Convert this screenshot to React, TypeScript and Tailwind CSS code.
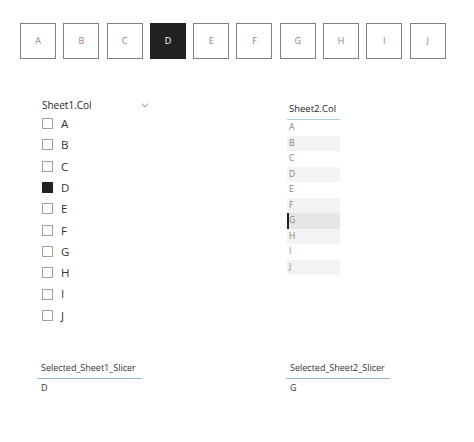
import React from "react";

const letters = ["A", "B", "C", "D", "E", "F", "G", "H", "I", "J"];

function ButtonRow() {
  return (
    <div className="flex gap-[7.3px] pl-[20px] pt-[23px]">
      {letters.map((l) => (
        <div
          key={l}
          className={`flex h-[36px] w-[36px] items-center justify-center border text-[9px] ${
            l === "D" ? "border-[#222] bg-[#222] text-white" : "border-[#808080] bg-white text-[#a56f95]"
          }`}
        >
          {l}
        </div>
      ))}
    </div>
  );
}

function CheckSlicer() {
  return (
    <div className="pl-[5px]">
      <div className="flex h-[15px] w-[107px] items-center justify-between">
        <span className="text-[10px] text-[#252423]">Sheet1.Col</span>
        <svg width="8" height="5" viewBox="0 0 8 5" fill="none" stroke="#888" strokeWidth="0.9">
          <path d="M0.5 0.5 L4 4 L7.5 0.5" />
        </svg>
      </div>
      {letters.map((l) => (
        <div key={l} className="flex h-[21.3px] items-center gap-[8px]">
          <div
            className={`h-[11px] w-[11px] border ${
              l === "D" ? "border-[#222] bg-[#222]" : "border-[#a0a0a0] bg-white"
            }`}
          />
          <span className="text-[11.5px] text-[#333]">{l}</span>
        </div>
      ))}
    </div>
  );
}

function ListSlicer() {
  return (
    <div className="w-[54px] pl-[1px]">
      <div className="flex h-[22px] items-center border-b border-[#a6cfd8] pl-[2px] pt-[1px] text-[9.5px] text-[#252423]">
        Sheet2.Col
      </div>
      {letters.map((l, i) => (
        <div
          key={l}
          className={`flex h-[15.5px] items-center pl-[2px] text-[8.5px] text-[#858585] ${
            l === "G" ? "bg-[#e6e6e6] border-l-2 border-[#222] !pl-0" : i % 2 === 1 ? "bg-[#f3f3f3]" : "bg-white"
          }`}
        >
          {l}
        </div>
      ))}
    </div>
  );
}

function Card({ title, value, width }: { title: string; value: string; width: string }) {
  return (
    <div className={width}>
      <div className="flex h-[21px] items-center border-b border-[#8fb8cc] pl-[4px] text-[9px] text-[#333]">
        {title}
      </div>
      <div className="pl-[4px] pt-[2px] text-[9px] leading-[14px] text-[#333]">{value}</div>
    </div>
  );
}

export default function App() {
  return (
    <div
      className="h-[442px] w-[474px] overflow-hidden bg-white"
      style={{ fontFamily: '"Open Sans", "Noto Sans", sans-serif' }}
    >
      <ButtonRow />
      <div className="grid grid-cols-[249px_auto] pl-[37px] pt-[39px]">
        <CheckSlicer />
        <ListSlicer />
        <div className="col-span-2 h-[32px]" />
        <Card title="Selected_Sheet1_Slicer" value="D" width="w-[105px]" />
        <Card title="Selected_Sheet2_Slicer" value="G" width="w-[104px]" />
      </div>
    </div>
  );
}
